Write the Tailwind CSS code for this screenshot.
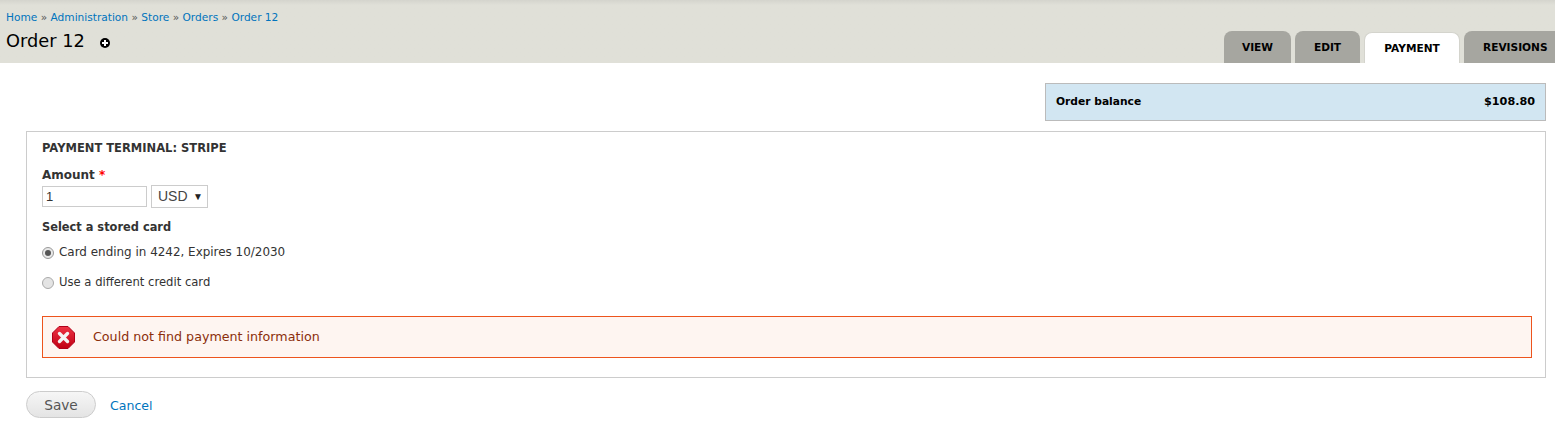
<!doctype html>
<html><head><meta charset="utf-8"><script src="https://cdn.jsdelivr.net/npm/@tailwindcss/browser@4"></script></head>
<body class="bg-white h-[432px] overflow-hidden font-['DejaVu_Sans',Verdana,sans-serif] text-[11px] text-[#333]">
<header class="h-[63px] bg-[#e0e0d8] bg-gradient-to-b from-[#d4d4cd] to-[#e0e0d8] to-[5px] flex justify-between relative">
  <div class="pl-[6px] pt-[9px]">
    <div class="text-[10.6px] leading-[16px] text-[#0074bd]"><a>Home</a> <span class="text-[#555]">»</span> <a>Administration</a> <span class="text-[#555]">»</span> <a>Store</a> <span class="text-[#555]">»</span> <a>Orders</a> <span class="text-[#555]">»</span> <a>Order 12</a></div>
    <div class="flex items-center mt-[4px]">
      <h1 class="text-[17.8px] leading-[24px] text-black font-normal">Order 12</h1>
      <svg class="ml-[15px] mt-[4px]" width="10" height="10" viewBox="0 0 10 10"><circle cx="5" cy="5" r="5" fill="#000"/><path d="M4 2h2v2h2v2H6v2H4V6H2V4h2z" fill="#fff"/></svg>
    </div>
  </div>
  <nav class="flex items-end gap-[4px] text-[10.6px] font-bold text-black uppercase self-end">
    <a class="w-[67px] h-[32px] pt-[2px] bg-[#a6a6a0] rounded-t-[8px] flex items-center justify-center">View</a>
    <a class="w-[65px] h-[32px] pt-[2px] bg-[#a6a6a0] rounded-t-[8px] flex items-center justify-center">Edit</a>
    <a class="w-[96px] h-[31px] pt-[2px] bg-white rounded-t-[8px] border border-b-0 border-[#d4d4cd] flex items-center justify-center">Payment</a>
    <a class="w-[91px] h-[32px] pt-[2px] bg-[#a6a6a0] rounded-tl-[8px] flex items-center pl-[19px] whitespace-nowrap">Revisions</a>
  </nav>
</header>
<main class="pl-[26px] pr-[9px] pt-[20px]">
  <div class="flex justify-end">
    <div class="w-[501px] h-[38px] bg-[#d2e6f2] border border-[#bbb] flex items-center justify-between px-[10px] font-bold text-black text-[10.7px]"><span>Order balance</span><span class="text-[11.2px]">$108.80</span></div>
  </div>
  <fieldset class="mt-[10px] h-[247px] border border-[#ccc] pl-[15px] pr-[13px] pt-[8px]">
    <div class="font-bold text-[11.5px] leading-[16px] uppercase text-[#333]">Payment terminal: Stripe</div>
    <label class="block font-bold text-[12px] leading-[16px] mt-[11px]">Amount <span class="text-[#f00]">*</span></label>
    <div class="flex items-center gap-[4px] mt-[2px]">
      <input value="1" class="w-[105px] h-[21px] border border-[#ccc] pl-[3px] text-[13px] font-['Liberation_Sans',sans-serif] text-[#333] outline-none">
      <div class="w-[57px] h-[23px] border border-[#ccc] flex items-center justify-between pl-[6px] pr-[4px] text-[14px] font-['Liberation_Sans',sans-serif] text-[#444]"><span>USD</span><span class="text-[10px] text-[#222]">▼</span></div>
    </div>
    <div class="font-bold text-[11.4px] leading-[16px] mt-[11px]">Select a stored card</div>
    <div class="flex items-center gap-[6px] mt-[10px] h-[16px]">
      <span class="w-[12px] h-[12px] rounded-full border border-[#999] bg-[#e8e8e8] flex items-center justify-center"><span class="w-[6px] h-[6px] rounded-full bg-[#555]"></span></span>
      <span class="text-[11.95px] ml-[-1px]">Card ending in 4242, Expires 10/2030</span>
    </div>
    <div class="flex items-center gap-[6px] mt-[14px] h-[16px]">
      <span class="w-[12px] h-[12px] rounded-full border border-[#aaa] bg-[#e4e4e4]"></span>
      <span class="text-[11.6px] ml-[-1px]">Use a different credit card</span>
    </div>
    <div class="mt-[25px] h-[42px] border border-[#ed541d] bg-[#fef5f1] flex items-center text-[#8c2e0b] text-[12.68px]">
      <svg class="ml-[9px]" width="23" height="23" viewBox="0 0 23 23"><defs><linearGradient id="e" x1="0" y1="0" x2="0" y2="1"><stop offset="0" stop-color="#ee3344"/><stop offset="1" stop-color="#c00014"/></linearGradient></defs><path d="M7 .5h9L22.5 7v9L16 22.5H7L.5 16V7z" fill="url(#e)" stroke="#b0001a"/><path d="M7.5 7.5l8 8M15.5 7.5l-8 8" stroke="#f4f4f4" stroke-width="3.4" stroke-linecap="round"/></svg>
      <span class="ml-[18px]">Could not find payment information</span>
    </div>
  </fieldset>
  <div class="flex items-center mt-[13px]">
    <button class="w-[70px] h-[27px] pt-[1px] rounded-[14px] border border-[#ccc] bg-gradient-to-b from-[#f6f6f6] to-[#e4e4e4] text-[#555] text-[13.7px]">Save</button>
    <a class="ml-[14px] mt-[4px] text-[#0074bd] text-[12.55px]">Cancel</a>
  </div>
</main>
</body></html>
